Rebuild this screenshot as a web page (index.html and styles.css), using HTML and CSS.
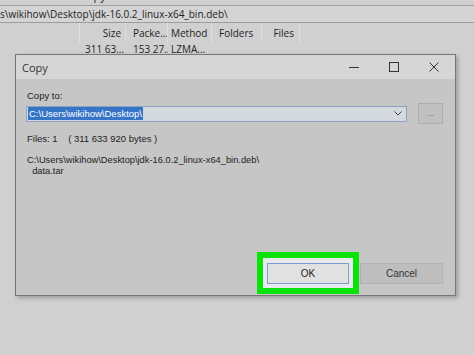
FILE: index.html
```html
<!DOCTYPE html>
<html lang="en">
<head>
    <meta charset="UTF-8">
    <title>Copy</title>
    <link rel="stylesheet" href="styles.css">
</head>
<body>
    <div class="explorer">
        <div class="menu-cut"><span>Copy</span></div>
        <div class="path-bar">s\wikihow\Desktop\jdk-16.0.2_linux-x64_bin.deb\</div>
        <div class="list-head">
            <span class="col col-name"></span>
            <span class="col col-size">Size</span>
            <span class="col col-packed">Packe...</span>
            <span class="col col-method">Method</span>
            <span class="col col-folders">Folders</span>
            <span class="col col-files">Files</span>
        </div>
        <div class="list-row">
            <span class="col col-name"></span>
            <span class="col col-size">311 63...</span>
            <span class="col col-packed">153 27...</span>
            <span class="col col-method">LZMA...</span>
        </div>
    </div>

    <div class="dialog">
        <div class="title-bar">
            <span class="title">Copy</span>
            <div class="win-controls">
                <span class="win-btn">
                    <svg width="10" height="10" viewBox="0 0 10 10"><path d="M0 5.5H10" stroke="#333" stroke-width="1"/></svg>
                </span>
                <span class="win-btn">
                    <svg width="10" height="10" viewBox="0 0 10 10"><rect x="0.5" y="0.5" width="9" height="9" fill="none" stroke="#333" stroke-width="1"/></svg>
                </span>
                <span class="win-btn">
                    <svg width="10" height="10" viewBox="0 0 10 10"><path d="M0.5 0.5L9.5 9.5M9.5 0.5L0.5 9.5" stroke="#333" stroke-width="1"/></svg>
                </span>
            </div>
        </div>
        <div class="dialog-body">
            <div class="label">Copy to:</div>
            <div class="dest-row">
                <div class="combo">
                    <span class="sel">C:\Users\wikihow\Desktop\</span>
                    <svg class="chevron" width="8" height="5" viewBox="0 0 8 5"><path d="M0.5 0.5L4 4L7.5 0.5" fill="none" stroke="#444" stroke-width="1"/></svg>
                </div>
                <button class="browse">...</button>
            </div>
            <p class="info">Files: 1&nbsp;&nbsp;&nbsp;&nbsp;( 311 633 920 bytes )</p>
            <p class="src">C:\Users\wikihow\Desktop\jdk-16.0.2_linux-x64_bin.deb\<br>&nbsp; data.tar</p>
            <div class="actions">
                <span class="highlight"><button class="btn btn-ok">OK</button></span>
                <button class="btn btn-cancel">Cancel</button>
            </div>
        </div>
    </div>
</body>
</html>
```

FILE: styles.css
```css
body {
    margin: 0;
    width: 474px;
    height: 355px;
    overflow: hidden;
    background-color: #d0d0d0;
    font-family: "Liberation Sans", Arial, sans-serif;
    color: #222;
}
.explorer {
    font-family: "Open Sans", "Noto Sans", sans-serif;
    color: #1e1e1e;
}
.menu-cut {
    height: 5px;
    overflow: hidden;
    border-bottom: 1px solid #a0a0a0;
    padding-left: 80px;
    font-size: 11px;
}
.menu-cut span {
    display: block;
    margin-top: -10px;
    line-height: 12px;
}
.path-bar {
    height: 16px;
    line-height: 16px;
    font-size: 10px;
    white-space: nowrap;
    border-bottom: 1px solid #9c9c9c;
    background: #d4d4d4;
}
.list-head, .list-row {
    display: flex;
    font-size: 10px;
    white-space: nowrap;
}
.list-head {
    height: 20px;
    line-height: 20px;
}
.list-head .col {
    border-right: 1px solid #dedede;
}
.list-row {
    height: 11px;
    line-height: 13px;
    overflow: hidden;
}
.col {
    box-sizing: border-box;
    overflow: hidden;
}
.col-name { width: 80px; }
.col-size { width: 46px; text-align: right; padding-right: 4px; }
.col-packed { width: 42px; padding-left: 7px; }
.col-method { width: 44px; padding-left: 3px; }
.col-folders { width: 50px; padding-left: 7px; }
.col-files { width: 38px; text-align: right; padding-right: 5px; }
.list-row .col-size { text-align: left; padding: 0 0 0 5px; }

.dialog {
    position: relative;
    margin-left: 15px;
    width: 439px;
    border: 1px solid #767676;
    box-shadow: 2px 2px 4px rgba(0, 0, 0, 0.25);
    background: #c6c6c6;
}
.title-bar {
    display: flex;
    align-items: center;
    justify-content: space-between;
    height: 24px;
    padding-left: 6px;
    background: #d6d6d6;
}
.title {
    font-family: "Open Sans", "Noto Sans", sans-serif;
    font-size: 11px;
    color: #333;
}
.win-controls {
    display: flex;
    margin-right: 1px;
}
.win-btn {
    display: flex;
    align-items: center;
    justify-content: center;
    width: 40px;
    height: 24px;
}
.dialog-body {
    display: flex;
    flex-direction: column;
    box-sizing: border-box;
    height: 216px;
    padding: 11px 12px 1px 10px;
    font-size: 9.5px;
}
.label {
    line-height: 12px;
    padding-left: 1px;
}
.dest-row {
    display: flex;
    align-items: center;
    margin-top: 1px;
    height: 21px;
}
.combo {
    display: flex;
    align-items: center;
    justify-content: space-between;
    box-sizing: border-box;
    width: 381px;
    height: 16px;
    padding: 0 4px 0 1px;
    border: 1px solid #8ea3bf;
    background: #d4d9df;
}
.sel {
    background: #3674c7;
    color: #fff;
    line-height: 13px;
    padding: 0 1px;
}
.browse {
    box-sizing: border-box;
    width: 25px;
    height: 21px;
    margin-left: 11px;
    padding: 0;
    border: 1px solid #adadad;
    background: #c0c0c0;
    color: #555;
    font-family: inherit;
    font-size: 8px;
}
.info {
    margin: 9px 0 0;
    line-height: 12px;
    padding-left: 1px;
}
.src {
    margin: 10px 0 0;
    line-height: 11px;
    padding-left: 1px;
    font-size: 9.3px;
}
.actions {
    display: flex;
    align-items: center;
    justify-content: flex-end;
    margin-top: auto;
}
.highlight {
    display: flex;
    border: 6px solid #0ae30a;
    padding: 5px 4px 4px 4px;
    background: #e7eaec;
}
.btn {
    box-sizing: border-box;
    height: 21px;
    padding: 0;
    font-family: inherit;
    font-size: 10px;
    color: #222;
}
.btn-ok {
    width: 82px;
    border: 1px solid #7b9dd4;
    background: #e1e1e1;
}
.btn-cancel {
    width: 83px;
    margin-left: 1px;
    border: 1px solid #b2b2b2;
    background: #bebebe;
    color: #333;
}
```
